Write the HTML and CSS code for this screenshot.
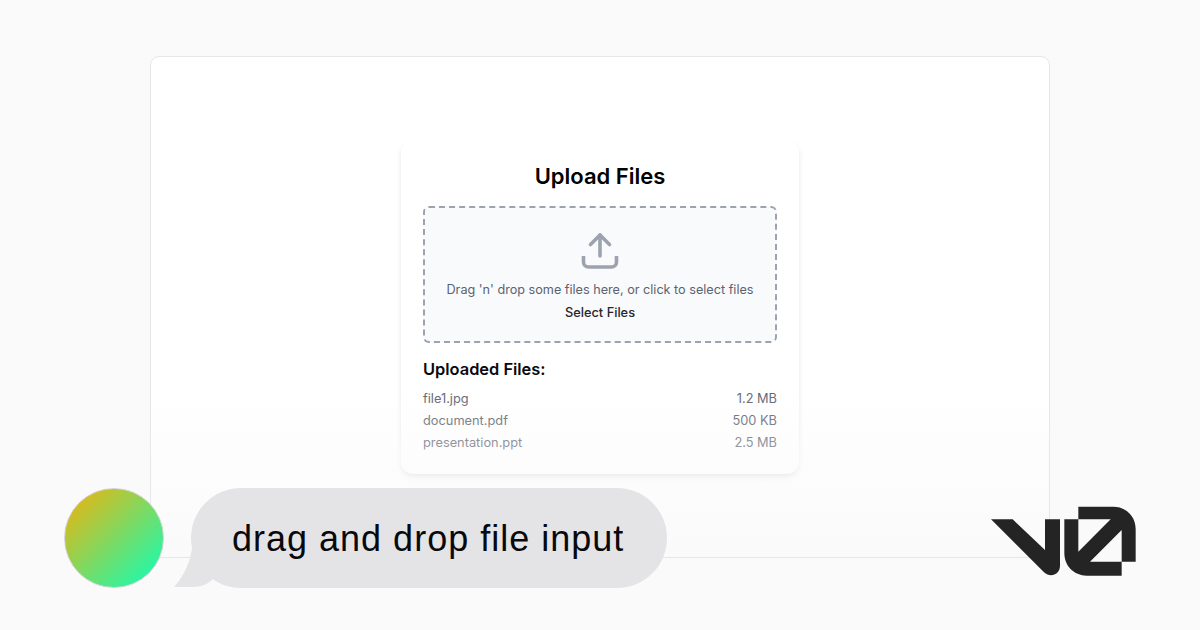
FILE: index.html
```html
<!DOCTYPE html>
<html lang="en">
  <head>
    <meta charset="UTF-8" />
    <meta name="viewport" content="width=device-width, initial-scale=1.0" />
    <title>drag and drop file input</title>
    <link rel="stylesheet" href="styles.css">
  </head>
  <body>
    <main class="frame">
      <section class="card">
        <h1>Upload Files</h1>
        <div class="dropzone">
          <svg class="upload-icon" viewBox="0 0 40 40" fill="none" stroke="currentColor" stroke-width="3.6" stroke-linecap="round" stroke-linejoin="round">
            <path d="M20 24V3" />
            <path d="M10.5 12.5L20 3l9.5 9.5" />
            <path d="M3.5 24v6a5 5 0 0 0 5 5h23a5 5 0 0 0 5-5v-6" stroke-linecap="butt" />
          </svg>
          <p>Drag 'n' drop some files here, or click to select files</p>
          <button>Select Files</button>
        </div>
        <h2>Uploaded Files:</h2>
        <ul class="files">
          <li><span>file1.jpg</span><span>1.2 MB</span></li>
          <li><span>document.pdf</span><span>500 KB</span></li>
          <li><span>presentation.ppt</span><span>2.5 MB</span></li>
        </ul>
      </section>
    </main>

    <div class="prompt">
      <div class="avatar"></div>
      <div class="bubble">
        <svg class="tail" viewBox="0 0 50 51"><path d="M20 0C20 20 12 38 1 50H20C28 50 35 47 40 42L50 20Z" /></svg>
        drag and drop file input
      </div>
    </div>

    <svg class="logo" viewBox="0 0 510 270">
      <path d="M33 73H98L195 165V73H240V212C240 238 212 250 192 232Z" />
      <path d="M295 35H400C438 35 467 64 467 102V200H425V105L330 200H425V242H320C282 242 253 213 253 175V73H295V170L392 73H295Z" />
    </svg>
  </body>
</html>
```

FILE: styles.css
```css
* {
  box-sizing: border-box;
}

body {
  margin: 0;
  height: 630px;
  overflow: hidden;
  padding-top: 56px;
  background: #fafafa;
  font-family: "Inter", sans-serif;
  position: relative;
}

.frame {
  width: 900px;
  height: 502px;
  margin: 0 auto;
  border: 1px solid #e5e7eb;
  border-radius: 9px;
  background: #fff;
  display: flex;
  align-items: center;
  justify-content: center;
  position: relative;
}

/* fade at the bottom of the frame */
.frame::after {
  content: "";
  position: absolute;
  left: 0;
  right: 0;
  bottom: 0;
  height: 170px;
  border-radius: 0 0 9px 9px;
  background: linear-gradient(to bottom, rgb(250 250 250 / 0), #fafafa);
}

.card {
  width: 398px;
  height: 334px;
  padding: 22px;
  background: #fff;
  border-radius: 12px;
  box-shadow: 0 4px 7px -1px rgb(0 0 0 / 0.1), 0 2px 4px -2px rgb(0 0 0 / 0.1);
}

h1 {
  margin: 0 0 16px;
  text-align: center;
  font-size: 22px;
  line-height: 28px;
  font-weight: 600;
  color: #000;
}

.dropzone {
  height: 137px;
  border: 2px dashed #9ca3af;
  border-radius: 6px;
  background: #f9fafb;
  display: flex;
  flex-direction: column;
  align-items: center;
  padding-top: 24px;
}

.upload-icon {
  width: 40px;
  height: 40px;
  color: #9ca3af;
}

.dropzone p {
  margin: 8px 0 0;
  font-size: 12.65px;
  line-height: 20px;
  color: #5b6370;
}

.dropzone button {
  margin-top: 3px;
  padding: 0;
  border: 0;
  background: none;
  font: 500 12.8px/20px "Inter", sans-serif;
  color: #27272a;
}

h2 {
  margin: 15px 0 8px;
  font-size: 16.4px;
  line-height: 22px;
  font-weight: 600;
  color: #09090b;
}

.files {
  margin: 0;
  padding: 0;
  list-style: none;
  font-size: 12.8px;
  line-height: 22px;
  color: #5b6370;
}

.files li {
  display: flex;
  justify-content: space-between;
}

.prompt {
  position: absolute;
  left: 64px;
  top: 488px;
  display: flex;
  gap: 27px;
}

.avatar {
  width: 100px;
  height: 100px;
  border-radius: 50%;
  border: 1px solid #d4d4d8;
  background: linear-gradient(135deg, #e2b714 8%, #2cf5a2 85%);
}

.bubble {
  position: relative;
  height: 100px;
  padding: 2px 43px 0 41px;
  border-radius: 50px;
  background: #e4e4e7;
  display: flex;
  align-items: center;
  font-family: "Liberation Sans", sans-serif;
  font-size: 36px;
  letter-spacing: 1px;
  color: #09090b;
}

.tail {
  position: absolute;
  left: -18px;
  top: 49px;
  width: 50px;
  height: 51px;
  fill: #e4e4e7;
}

.logo {
  position: absolute;
  left: 980px;
  top: 495px;
  width: 170px;
  height: 90px;
  fill: #242424;
}
```
